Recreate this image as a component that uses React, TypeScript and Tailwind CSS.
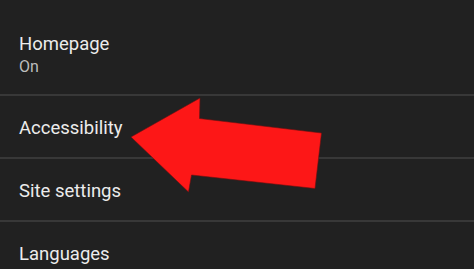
import React from "react";

const rows = [
  { title: "Accessibility" },
  { title: "Site settings" },
  { title: "Languages" },
];

function Arrow() {
  return (
    <svg
      className="absolute left-0 top-0 pointer-events-none"
      width="474"
      height="269"
      viewBox="0 0 474 269"
    >
      <polygon
        points="131,137 200,98 199.5,118.5 321.5,133 315,188.5 191.5,175 188.5,192"
        fill="#fd1717"
        stroke="#6b1010"
        strokeWidth="0.6"
        strokeLinejoin="round"
      />
    </svg>
  );
}

export default function App() {
  return (
    <div
      className="relative w-[474px] h-[269px] overflow-hidden bg-[#212121]"
      style={{ fontFamily: "Roboto, 'Noto Sans', sans-serif" }}
    >
      <div className="h-[94px] pl-[19px] pt-[32px]">
        <div className="text-[18.5px] leading-[24px] text-[#ececec]">Homepage</div>
        <div className="text-[16px] leading-[20px] text-[#bdbdbd] mt-[1px]">On</div>
      </div>
      {rows.map((r) => (
        <div key={r.title}>
          <div className="h-[2px] bg-[#383838]" />
          <div className="h-[61px] pl-[19px] flex items-center">
            <span className="text-[18.5px] leading-[24px] text-[#ececec] pt-[2px]">
              {r.title}
            </span>
          </div>
        </div>
      ))}
      <Arrow />
    </div>
  );
}
